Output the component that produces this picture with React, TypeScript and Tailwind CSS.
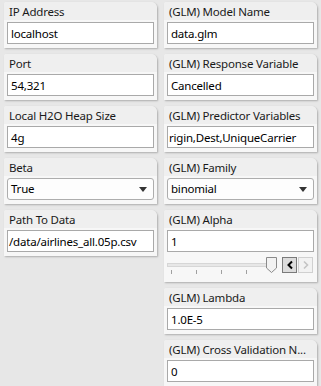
import React from "react";

const font = { fontFamily: '"Noto Sans", "Open Sans", sans-serif', letterSpacing: "-0.2px" };

function Card({ label, children, h = "h-[46px]" }: { label: string; children: React.ReactNode; h?: string }) {
  return (
    <div className={`${h} flex flex-col rounded-tr-[6px] rounded-tl-[3px] bg-[#f7f7f7] shadow-[1px_1px_2px_rgba(0,0,0,0.25)] overflow-hidden`}>
      <div className="h-[18px] shrink-0 bg-[#efefef] pl-[5px] text-[11.5px] leading-[19px] text-[#1a1a1a] whitespace-nowrap overflow-hidden">
        {label}
      </div>
      <div className="px-[3px] pt-[2px]">{children}</div>
    </div>
  );
}

function TextBox({ value, pl = "pl-[3px]" }: { value: string; pl?: string }) {
  return (
    <div className={`h-[22px] border border-[#a9a9a9] bg-white ${pl} text-[11.5px] leading-[21px] text-black whitespace-nowrap overflow-hidden`}>
      {value}
    </div>
  );
}

function Select({ value }: { value: string }) {
  return (
    <div className="h-[22px] flex items-center justify-between rounded-[3px] border border-[#adadad] bg-[#fdfdfd] pl-[3px] pr-[6px] text-[11.5px] text-black">
      <span>{value}</span>
      <svg width="8" height="5" viewBox="0 0 8 5">
        <path d="M0 0 L8 0 L4 5 Z" fill="#333" />
      </svg>
    </div>
  );
}

function Slider() {
  return (
    <div className="mt-[5px] flex items-start h-[16px]">
      <div className="relative w-[112px] h-[16px]">
        <div className="absolute left-0 top-[6px] w-[104px] h-[4px] bg-[#e7e7e7] border border-[#d6d6d6]" />
        {[4, 29, 54, 79].map((x) => (
          <div key={x} className="absolute top-[13px] w-[1px] h-[4px] bg-[#a0a0a0]" style={{ left: x }} />
        ))}
        <svg className="absolute left-[99px] top-0" width="11" height="16" viewBox="0 0 11 16">
          <path d="M0.5 0.5 H10.5 V11 L5.5 15.5 L0.5 11 Z" fill="#f2f2f2" stroke="#8a8a8a" />
        </svg>
      </div>
      <div className="ml-[3px] w-[15px] h-[16px] flex items-center justify-center border border-[#7a7a7a] bg-[#dcdcdc]">
        <svg width="8" height="10" viewBox="0 0 8 10">
          <path d="M6 1.5 L2.5 5 L6 8.5" fill="none" stroke="#000" strokeWidth="2" />
        </svg>
      </div>
      <div className="ml-[1px] w-[15px] h-[16px] flex items-center justify-center border border-[#d0d0d0] bg-[#f2f2f2]">
        <svg width="8" height="10" viewBox="0 0 8 10">
          <path d="M2 1.5 L5.5 5 L2 8.5" fill="none" stroke="#c4c4c4" strokeWidth="1.6" />
        </svg>
      </div>
    </div>
  );
}

export default function App() {
  return (
    <div className="w-[321px] h-[386px] overflow-hidden bg-[#e7e7e7] pl-[4px] pt-[2px] flex gap-[7px]" style={font}>
      <div className="w-[153px] flex flex-col gap-[6px]">
        <Card label="IP Address"><TextBox value="localhost" /></Card>
        <Card label="Port"><TextBox value="54,321" /></Card>
        <Card label="Local H2O Heap Size"><TextBox value="4g" /></Card>
        <Card label="Beta"><Select value="True" /></Card>
        <Card label="Path To Data"><TextBox value="/data/airlines_all.05p.csv" pl="pl-[1px]" /></Card>
      </div>
      <div className="w-[153px] flex flex-col gap-[6px]">
        <Card label="(GLM) Model Name"><TextBox value="data.glm" /></Card>
        <Card label="(GLM) Response Variable"><TextBox value="Cancelled" /></Card>
        <Card label="(GLM) Predictor Variables"><TextBox value="rigin,Dest,UniqueCarrier" pl="pl-[1px]" /></Card>
        <Card label="(GLM) Family"><Select value="binomial" /></Card>
        <Card label="(GLM) Alpha" h="h-[72px]">
          <TextBox value="1" />
          <Slider />
        </Card>
        <Card label="(GLM) Lambda"><TextBox value="1.0E-5" /></Card>
        <Card label="(GLM) Cross Validation N..."><TextBox value="0" /></Card>
      </div>
    </div>
  );
}
